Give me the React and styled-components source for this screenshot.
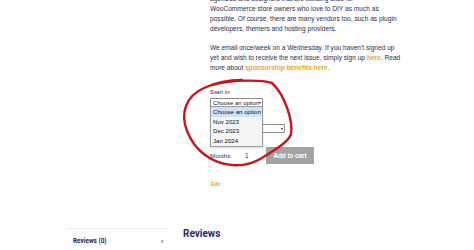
import React from 'react';
import styled, { createGlobalStyle } from 'styled-components';

const GlobalStyle = createGlobalStyle`
  html, body {
    margin: 0;
    padding: 0;
    background: #ffffff;
  }
  * {
    box-sizing: border-box;
  }
`;

const Page = styled.div`
  position: relative;
  width: 474px;
  height: 250px;
  overflow: hidden;
  background: #fff;
  font-family: "Liberation Sans", Arial, sans-serif;
  color: #2a2c50;
`;

const Description = styled.div`
  width: 200px;
  margin-left: 210px;
  margin-top: -6px;
`;

const P = styled.p`
  margin: 0 0 9px;
  font-size: 6.6px;
  line-height: 10px;
  white-space: nowrap;
`;

const A = styled.a`
  color: #f2a516;
  font-weight: 700;
  text-decoration: none;
`;

const Form = styled.div`
  margin-left: 210px;
  margin-top: 14px;
  width: 120px;
`;

const Label = styled.div`
  font-size: 6.2px;
  line-height: 10px;
  color: #2a2c50;
  white-space: nowrap;
`;

const SelectWrap = styled.div`
  position: relative;
  width: ${p => p.$w}px;
  margin-top: 1px;
`;

const Select = styled.div`
  display: flex;
  align-items: center;
  justify-content: space-between;
  height: 9px;
  padding: 0 1px 0 2px;
  border: 1px solid #8a8a8a;
  border-radius: 1px;
  background: #fff;
  font-size: 5.9px;
  color: #111;
  white-space: nowrap;
  overflow: hidden;
`;

const Caret = styled.span`
  flex: none;
  width: 0;
  height: 0;
  border-left: 1.5px solid transparent;
  border-right: 1.5px solid transparent;
  border-top: 2px solid #222;
`;

const List = styled.div`
  position: absolute;
  top: 8px;
  left: 0;
  width: 53px;
  z-index: 3;
  background: #f4f4f4;
  border: 1px solid #9a9a9a;
  box-shadow: 0 1px 2px rgba(0, 0, 0, 0.15);
`;

const Option = styled.div`
  height: 9.7px;
  line-height: 9.7px;
  padding-left: 2px;
  font-size: 6.1px;
  color: #111;
  background: ${p => (p.$active ? '#cfe1f7' : 'transparent')};
  white-space: nowrap;
`;

const Spacer = styled.div`
  height: ${p => p.$h}px;
`;

const CartRow = styled.div`
  display: flex;
  align-items: center;
  margin-top: 14px;
  height: 17px;
`;

const Qty = styled.div`
  width: 26px;
  height: 12px;
  margin-left: 3px;
  padding-left: 10px;
  font-size: 6.3px;
  line-height: 12px;
  color: #333;
  background: #fff;
`;

const CartButton = styled.button`
  width: 48px;
  height: 17px;
  margin-left: 5px;
  padding: 0;
  border: none;
  background: #a3a3a3;
  color: #fff;
  font-family: "Liberation Sans", Arial, sans-serif;
  font-weight: 700;
  font-size: 6.3px;
`;

const Edit = styled.a`
  display: block;
  margin-left: 211px;
  margin-top: 16px;
  font-size: 5px;
  line-height: 8px;
  font-weight: 700;
  color: #f2a516;
`;

const Bottom = styled.div`
  display: flex;
  align-items: flex-start;
  margin-top: 40px;
`;

const Tabs = styled.div`
  width: 102px;
  margin-left: 67px;
  border-top: 1px solid #eeeeee;
`;

const Tab = styled.div`
  display: flex;
  align-items: center;
  justify-content: space-between;
  height: 24px;
  padding: 0 6px;
  font-family: Roboto, "Liberation Sans", sans-serif;
  font-size: 6.4px;
  font-weight: 700;
  color: #22243f;
`;

const Chevron = styled.span`
  font-size: 7px;
  font-weight: 700;
`;

const Content = styled.div`
  margin-left: 14px;
`;

const Heading = styled.h2`
  margin: -1px 0 0;
  font-family: Roboto, "Liberation Sans", sans-serif;
  font-size: 10px;
  line-height: 14px;
  font-weight: 700;
  color: #1f2b6c;
`;

const Annotation = styled.svg`
  position: absolute;
  left: 0;
  top: 0;
  width: 474px;
  height: 250px;
  pointer-events: none;
  z-index: 5;
`;

export default function App() {
  return (
    <Page>
      <GlobalStyle />
      <Description>
        <P>
          agencies and designers that are building sites for
          <br />
          WooCommerce store owners who love to DIY as much as
          <br />
          possible. Of course, there are many vendors too, such as plugin
          <br />
          developers, themers and hosting providers.
        </P>
        <P>
          We email once/week on a Wednesday. If you haven't signed up
          <br />
          yet and wish to receive the next issue, simply sign up <A href="#">here</A>. Read
          <br />
          more about <A href="#">sponsorship benefits here</A>.
        </P>
      </Description>

      <Form>
        <Label>Start in</Label>
        <SelectWrap $w={53}>
          <Select>
            Choose an option
            <Caret />
          </Select>
          <List>
            <Option $active>Choose an option</Option>
            <Option>Nov 2023</Option>
            <Option>Dec 2023</Option>
            <Option>Jan 2024</Option>
          </List>
        </SelectWrap>
        <Spacer $h={6} />
        <Label>Select duration</Label>
        <SelectWrap $w={75}>
          <Select>
            Choose an option
            <Caret />
          </Select>
        </SelectWrap>
        <CartRow>
          <Label>Months:</Label>
          <Qty>1</Qty>
          <CartButton>Add to cart</CartButton>
        </CartRow>
      </Form>

      <Edit>Edit</Edit>

      <Bottom>
        <Tabs>
          <Tab>
            Reviews (0)
            <Chevron>›</Chevron>
          </Tab>
        </Tabs>
        <Content>
          <Heading>Reviews</Heading>
        </Content>
      </Bottom>

      <Annotation viewBox="0 0 474 250">
        <path
          d="M 212 85 C 235 79, 262 80, 272 83 C 286 96, 293 122, 291 134 C 289 142, 273 151, 262 158 C 252 164, 242 166, 232 165 C 211 163, 195 151, 187 131 C 180 113, 186 96, 204 88 C 215 83, 230 80, 242 80"
          fill="none"
          stroke="#c4161c"
          strokeWidth="2.4"
          strokeLinecap="round"
        />
      </Annotation>
    </Page>
  );
}
